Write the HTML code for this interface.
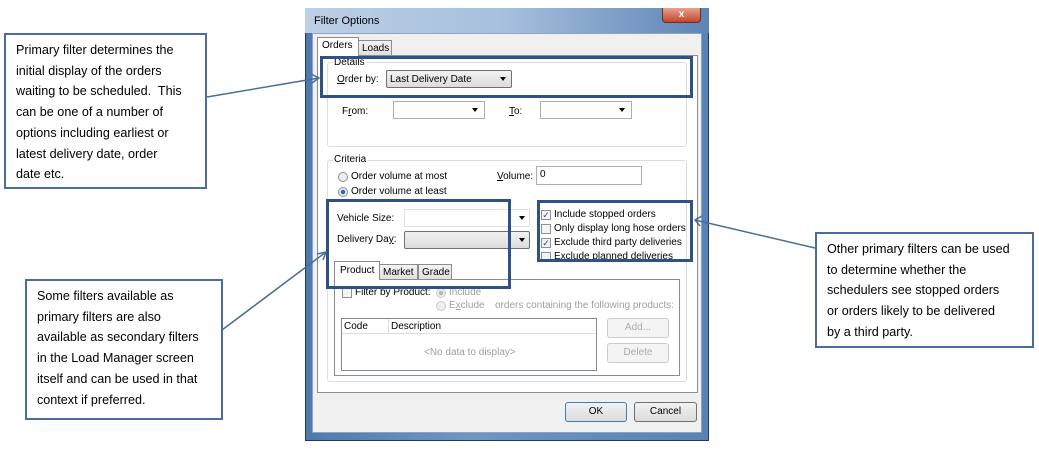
<!DOCTYPE html>
<html><head><style>
*{margin:0;padding:0;box-sizing:border-box}
body{width:1039px;height:450px;background:#fff;position:relative;overflow:hidden;font-family:"Liberation Sans",sans-serif}
.a{position:absolute}
.note{position:absolute;border:2px solid #4a6d9a;background:#fff;font-size:12.6px;line-height:20.7px;color:#000;padding:5px 0 0 10px}
.w{font-size:10px;color:#000;position:absolute;white-space:nowrap}
.g{color:#a0a0a0}
.grp{position:absolute;border:1px solid #d5dfe5;border-radius:3px;background:#fff}
.dd{position:absolute;border:1px solid #abadb3;background:#fff}
.dd:after{content:"";position:absolute;right:6px;top:50%;margin-top:-2px;border-left:3.5px solid transparent;border-right:3.5px solid transparent;border-top:4px solid #000}
.hl{position:absolute;border:3px solid #2e5283}
.cb{position:absolute;width:10px;height:10px;border:1px solid #8e8f8f;background:#f4f4f4;font-size:9px;line-height:9px;text-align:center;color:#2b4a9a}
.rb{position:absolute;width:10px;height:10px;border:1px solid #8e8f8f;border-radius:50%;background:#eee}
.btn{position:absolute;border:1px solid #707070;border-radius:3px;background:linear-gradient(#f2f2f2,#dcdcdc);font-size:10px;text-align:center}
</style></head><body>
<div class="a" style="left:305px;top:8px;width:404px;height:433px;background:linear-gradient(90deg,#4f79ad,#6f95c3 40%,#5a82b4);border:1px solid #1e3a60"></div>
<div class="a" style="left:305px;top:8px;width:404px;height:25px;background:linear-gradient(90deg,#bcd0e6,#a6bfdc 50%,#5c84b6)"></div>
<div class="w" style="left:314px;top:15px;font-size:11px">Filter Options</div>
<div class="a" style="left:662px;top:8px;width:39px;height:15px;background:linear-gradient(#e6a38f,#c4452b);border:1px solid #6b2f23;border-top:none;border-radius:0 0 4px 4px;color:#fff;font-size:10px;font-weight:bold;text-align:center;line-height:13px">x</div>
<div class="a" style="left:312px;top:33px;width:390px;height:400px;background:#f0f0f0;border:1px solid #8ea4c0"></div>
<div class="a" style="left:317px;top:55px;width:381px;height:338px;background:#fff;border:1px solid #898c95"></div>
<div class="a" style="left:358px;top:40px;width:34px;height:16px;background:linear-gradient(#f4f4f4,#e0e0e0);border:1px solid #898c95"></div>
<div class="w" style="left:362px;top:43px">Loads</div>
<div class="a" style="left:317px;top:37px;width:42px;height:19px;background:#fff;border:1px solid #898c95;border-bottom:none"></div>
<div class="w" style="left:322px;top:40px">Orders</div>
<div class="grp" style="left:327px;top:62px;width:360px;height:85px"></div>
<div class="w" style="left:333px;top:57px;background:#fff;padding:0 1px">Details</div>
<div class="w" style="left:337px;top:74px"><u>O</u>rder by:</div>
<div class="a" style="left:386px;top:70px;width:126px;height:18px;border:1px solid #707070;border-radius:2px;background:linear-gradient(#f2f2f2,#dcdcdc)"></div>
<div class="w" style="left:390px;top:74px">Last Delivery Date</div>
<div class="a" style="left:500px;top:77px;border-left:3.5px solid transparent;border-right:3.5px solid transparent;border-top:4px solid #000"></div>
<div class="a" style="left:337px;top:95px;width:340px;height:1px;background:#ccc"></div>
<div class="w" style="left:342px;top:106px">F<u>r</u>om:</div>
<div class="dd" style="left:393px;top:101px;width:92px;height:18px"></div>
<div class="w" style="left:509px;top:106px"><u>T</u>o:</div>
<div class="dd" style="left:540px;top:101px;width:92px;height:18px"></div>
<div class="grp" style="left:327px;top:160px;width:360px;height:222px"></div>
<div class="w" style="left:333px;top:154px;background:#fff;padding:0 1px">Criteria</div>
<div class="rb" style="left:338px;top:172px"></div>
<div class="w" style="left:351px;top:171px">Order volume at most</div>
<div class="rb" style="left:338px;top:187px;background:radial-gradient(#2a6fb5 35%,#eee 45%)"></div>
<div class="w" style="left:351px;top:186px">Order volume at least</div>
<div class="w" style="left:497px;top:171px"><u>V</u>olume:</div>
<div class="a" style="left:536px;top:166px;width:106px;height:19px;border:1px solid #abadb3;background:#fff;font-size:10px;padding:2px 3px">0</div>
<div class="w" style="left:337px;top:213px">Vehicle Size:</div>
<div class="a" style="left:404px;top:209px;width:126px;height:18px;border:1px solid #e0e0e0;background:#fff"></div>
<div class="a" style="left:519px;top:216px;border-left:3.5px solid transparent;border-right:3.5px solid transparent;border-top:4px solid #000"></div>
<div class="w" style="left:337px;top:234px">Delivery Da<u>y</u>:</div>
<div class="a" style="left:404px;top:231px;width:126px;height:18px;border:1px solid #707070;border-radius:2px;background:linear-gradient(#f2f2f2,#dcdcdc)"></div>
<div class="a" style="left:519px;top:238px;border-left:3.5px solid transparent;border-right:3.5px solid transparent;border-top:4px solid #000"></div>
<div class="cb" style="left:541px;top:210px">✓</div><div class="w" style="left:554px;top:209px">Include stopped orders</div>
<div class="cb" style="left:541px;top:224px"></div><div class="w" style="left:554px;top:223px">Only display long hose orders</div>
<div class="cb" style="left:541px;top:238px">✓</div><div class="w" style="left:554px;top:237px">Exclude third party deliveries</div>
<div class="cb" style="left:541px;top:252px"></div><div class="w" style="left:554px;top:251px">Exclude planned deliveries</div>
<div class="a" style="left:334px;top:279px;width:346px;height:97px;border:1px solid #898c95;background:#fff"></div>
<div class="a" style="left:379px;top:264px;width:39px;height:16px;background:linear-gradient(#f4f4f4,#e0e0e0);border:1px solid #898c95"></div>
<div class="w" style="left:383px;top:267px">Market</div>
<div class="a" style="left:418px;top:264px;width:34px;height:16px;background:linear-gradient(#f4f4f4,#e0e0e0);border:1px solid #898c95"></div>
<div class="w" style="left:422px;top:267px">Grade</div>
<div class="a" style="left:334px;top:261px;width:46px;height:19px;background:#fff;border:1px solid #898c95;border-bottom:none"></div>
<div class="w" style="left:340px;top:265px">Product</div>
<div class="cb" style="left:342px;top:288px"></div><div class="w" style="left:355px;top:287px">Filter by Product:</div>
<div class="rb" style="left:436px;top:288px;background:radial-gradient(#bbb 35%,#eee 45%);border-color:#ccc"></div><div class="w g" style="left:449px;top:287px">Include</div>
<div class="rb" style="left:436px;top:301px;border-color:#ccc"></div><div class="w g" style="left:449px;top:300px">E<u>x</u>clude</div>
<div class="w g" style="left:495px;top:300px">orders containing the following products:</div>
<div class="a" style="left:341px;top:318px;width:256px;height:53px;border:1px solid #828790;background:#fff"></div>
<div class="a" style="left:342px;top:319px;width:254px;height:15px;border-bottom:1px solid #ddd"></div>
<div class="a" style="left:388px;top:319px;width:1px;height:15px;background:#ddd"></div>
<div class="w" style="left:344px;top:321px">Code</div>
<div class="w" style="left:391px;top:321px">Description</div>
<div class="w g" style="left:424px;top:347px">&lt;No data to display&gt;</div>
<div class="btn" style="left:607px;top:318px;width:62px;height:20px;border-color:#ccc;color:#aaa;line-height:18px;background:#f4f4f4">Add...</div>
<div class="btn" style="left:607px;top:343px;width:62px;height:20px;border-color:#ccc;color:#aaa;line-height:18px;background:#f4f4f4">Delete</div>
<div class="btn" style="left:565px;top:402px;width:62px;height:20px;border-color:#3c7fb1;line-height:18px">OK</div>
<div class="btn" style="left:634px;top:402px;width:63px;height:20px;line-height:18px">Cancel</div>
<div class="hl" style="left:320px;top:56px;width:373px;height:42px"></div>
<div class="hl" style="left:326px;top:199px;width:185px;height:90px"></div>
<div class="hl" style="left:537px;top:200px;width:156px;height:62px"></div>
<div class="note" style="left:4px;top:33px;width:203px;height:156px">Primary filter determines the<br>initial display of the orders<br>waiting to be scheduled.&nbsp; This<br>can be one of a number of<br>options including earliest or<br>latest delivery date, order<br>date etc.</div>
<div class="note" style="left:25px;top:279px;width:198px;height:141px">Some filters available as<br>primary filters are also<br>available as secondary filters<br>in the Load Manager screen<br>itself and can be used in that<br>context if preferred.</div>
<div class="note" style="left:815px;top:232px;width:219px;height:116px">Other primary filters can be used<br>to determine whether the<br>schedulers see stopped orders<br>or orders likely to be delivered<br>by a third party.</div>
<svg class="a" style="left:0;top:0" width="1039" height="450">
<g stroke="#4a6d9a" stroke-width="1.5" fill="none">
<line x1="207" y1="97" x2="319" y2="78"/><polyline points="311,74 319,78 312,83"/>
<line x1="222" y1="330" x2="326" y2="252"/><polyline points="317,254 326,252 323,260"/>
<line x1="815" y1="248" x2="695" y2="220"/><polyline points="702,216 695,220 700,226"/>
</g></svg>
</body></html>
